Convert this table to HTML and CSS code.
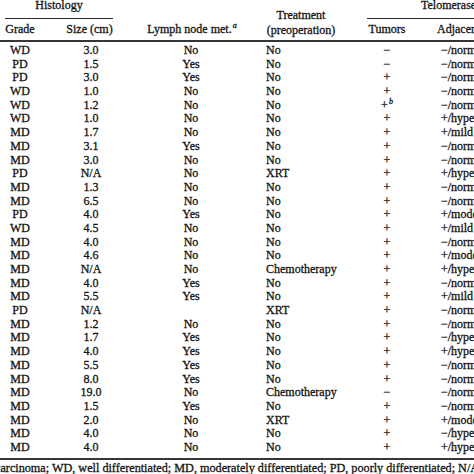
FILE: index.html
```html
<!DOCTYPE html>
<html>
<head>
<meta charset="utf-8">
<link rel="stylesheet" href="styles.css">
</head>
<body>
<div class="page">
  <div class="hdr">
    <div class="grp grp-hist"><span>Histology</span></div>
    <div class="treat"><span>Treatment</span><span>(preoperation)</span></div>
    <div class="grp grp-telo"><span>Telomerase activity</span></div>
    <div class="h h1">Grade</div>
    <div class="h h2">Size (cm)</div>
    <div class="h h3">Lymph node met.<sup>a</sup></div>
    <div class="h h5">Tumors</div>
    <div class="h h6">Adjacent mucosa</div>
  </div>
  <div class="rule"></div>
  <div class="body">
    <div class="row"><span class="c">WD</span><span class="c">3.0</span><span class="c">No</span><span class="l">No</span><span class="c">−</span><span class="a">−/normal</span></div>
    <div class="row"><span class="c">PD</span><span class="c">1.5</span><span class="c">Yes</span><span class="l">No</span><span class="c">−</span><span class="a">−/normal</span></div>
    <div class="row"><span class="c">PD</span><span class="c">3.0</span><span class="c">Yes</span><span class="l">No</span><span class="c">+</span><span class="a">−/normal</span></div>
    <div class="row"><span class="c">WD</span><span class="c">1.0</span><span class="c">No</span><span class="l">No</span><span class="c">+</span><span class="a">−/normal</span></div>
    <div class="row"><span class="c">WD</span><span class="c">1.2</span><span class="c">No</span><span class="l">No</span><span class="c">+<sup>b</sup></span><span class="a">−/normal</span></div>
    <div class="row"><span class="c">WD</span><span class="c">1.0</span><span class="c">No</span><span class="l">No</span><span class="c">+</span><span class="a">+/hyperplasia</span></div>
    <div class="row"><span class="c">MD</span><span class="c">1.7</span><span class="c">No</span><span class="l">No</span><span class="c">+</span><span class="a">+/mild</span></div>
    <div class="row"><span class="c">MD</span><span class="c">3.1</span><span class="c">Yes</span><span class="l">No</span><span class="c">+</span><span class="a">−/normal</span></div>
    <div class="row"><span class="c">MD</span><span class="c">3.0</span><span class="c">No</span><span class="l">No</span><span class="c">+</span><span class="a">−/normal</span></div>
    <div class="row"><span class="c">PD</span><span class="c">N/A</span><span class="c">No</span><span class="l">XRT</span><span class="c">+</span><span class="a">+/hyperplasia</span></div>
    <div class="row"><span class="c">MD</span><span class="c">1.3</span><span class="c">No</span><span class="l">No</span><span class="c">+</span><span class="a">−/normal</span></div>
    <div class="row"><span class="c">MD</span><span class="c">6.5</span><span class="c">No</span><span class="l">No</span><span class="c">+</span><span class="a">−/normal</span></div>
    <div class="row"><span class="c">PD</span><span class="c">4.0</span><span class="c">Yes</span><span class="l">No</span><span class="c">+</span><span class="a">+/moderate</span></div>
    <div class="row"><span class="c">WD</span><span class="c">4.5</span><span class="c">No</span><span class="l">No</span><span class="c">+</span><span class="a">+/mild</span></div>
    <div class="row"><span class="c">MD</span><span class="c">4.0</span><span class="c">No</span><span class="l">No</span><span class="c">+</span><span class="a">−/normal</span></div>
    <div class="row"><span class="c">MD</span><span class="c">4.6</span><span class="c">No</span><span class="l">No</span><span class="c">+</span><span class="a">+/moderate</span></div>
    <div class="row"><span class="c">MD</span><span class="c">N/A</span><span class="c">No</span><span class="l">Chemotherapy</span><span class="c">+</span><span class="a">+/hyperplasia</span></div>
    <div class="row"><span class="c">MD</span><span class="c">4.0</span><span class="c">Yes</span><span class="l">No</span><span class="c">+</span><span class="a">−/normal</span></div>
    <div class="row"><span class="c">MD</span><span class="c">5.5</span><span class="c">Yes</span><span class="l">No</span><span class="c">+</span><span class="a">+/mild</span></div>
    <div class="row"><span class="c">PD</span><span class="c">N/A</span><span class="c"></span><span class="l">XRT</span><span class="c">+</span><span class="a">−/normal</span></div>
    <div class="row"><span class="c">MD</span><span class="c">1.2</span><span class="c">No</span><span class="l">No</span><span class="c">+</span><span class="a">−/normal</span></div>
    <div class="row"><span class="c">MD</span><span class="c">1.7</span><span class="c">Yes</span><span class="l">No</span><span class="c">+</span><span class="a">−/hyperplasia</span></div>
    <div class="row"><span class="c">MD</span><span class="c">4.0</span><span class="c">Yes</span><span class="l">No</span><span class="c">+</span><span class="a">+/hyperplasia</span></div>
    <div class="row"><span class="c">MD</span><span class="c">5.5</span><span class="c">Yes</span><span class="l">No</span><span class="c">+</span><span class="a">−/normal</span></div>
    <div class="row"><span class="c">MD</span><span class="c">8.0</span><span class="c">Yes</span><span class="l">No</span><span class="c">+</span><span class="a">−/normal</span></div>
    <div class="row"><span class="c">MD</span><span class="c">19.0</span><span class="c">No</span><span class="l">Chemotherapy</span><span class="c">−</span><span class="a">−/normal</span></div>
    <div class="row"><span class="c">MD</span><span class="c">1.5</span><span class="c">Yes</span><span class="l">No</span><span class="c">+</span><span class="a">−/normal</span></div>
    <div class="row"><span class="c">MD</span><span class="c">2.0</span><span class="c">No</span><span class="l">XRT</span><span class="c">+</span><span class="a">+/moderate</span></div>
    <div class="row"><span class="c">MD</span><span class="c">4.0</span><span class="c">No</span><span class="l">No</span><span class="c">+</span><span class="a">−/hyperplasia</span></div>
    <div class="row"><span class="c">MD</span><span class="c">4.0</span><span class="c">No</span><span class="l">No</span><span class="c">+</span><span class="a">+/hyperplasia</span></div>
  </div>
  <div class="rule rule-bottom"></div>
  <div class="foot">carcinoma; WD, well differentiated; MD, moderately differentiated; PD, poorly differentiated; N/A, not available.</div>
</div>
</body>
</html>
```

FILE: styles.css
```css
html, body {
  margin: 0;
  padding: 0;
  background: #ffffff;
}

.page {
  width: 474px;
  height: 474px;
  overflow: hidden;
  font-family: "Liberation Serif", "Times New Roman", serif;
  font-size: 12px;
  color: #141414;
  -webkit-text-stroke: 0.3px #141414;
  white-space: nowrap;
}

.hdr,
.row {
  display: grid;
  grid-template-columns: 40px 102px 98px 122px 50px 160px;
  width: max-content;
}

.hdr {
  grid-template-rows: 20px 21px;
  margin-top: -1px;
}

.grp {
  line-height: 12px;
  border-bottom: 1px solid #2a2a2a;
}

.grp-hist {
  grid-column: 1 / 3;
  grid-row: 1;
  margin: 0 29px 0 5px;
  text-align: center;
}

.grp-telo {
  grid-column: 5 / 7;
  grid-row: 1;
  margin-left: 5px;
  padding-left: 54px;
}

.treat {
  grid-column: 4;
  grid-row: 1 / 3;
  display: flex;
  flex-direction: column;
  justify-content: flex-end;
  align-items: center;
  line-height: 14.5px;
  padding-bottom: 3px;
}

.h {
  grid-row: 2;
  line-height: 14px;
  padding-top: 3px;
}

.h1 { grid-column: 1; text-align: center; }
.h2 { grid-column: 2; text-align: center; padding-right: 3px; }
.h3 { grid-column: 3; text-align: center; padding-left: 2px; }
.h5 { grid-column: 5; text-align: center; }
.h6 { grid-column: 6; padding-left: 25px; }

sup {
  font-size: 8px;
  font-style: italic;
  line-height: 0;
  vertical-align: 5px;
  margin-left: 1px;
}

.rule {
  height: 2px;
  background: #363636;
  width: 474px;
}

.body {
  padding-top: 2px;
}

.row {
  height: 13.7px;
  line-height: 13.7px;
}

.c { text-align: center; }
.l { padding-left: 26px; }
.a { padding-left: 29px; }

.rule-bottom {
  margin-top: 3px;
}

.foot {
  margin-top: 2px;
  margin-left: -5px;
  line-height: 13px;
  font-size: 12.2px;
}
```
